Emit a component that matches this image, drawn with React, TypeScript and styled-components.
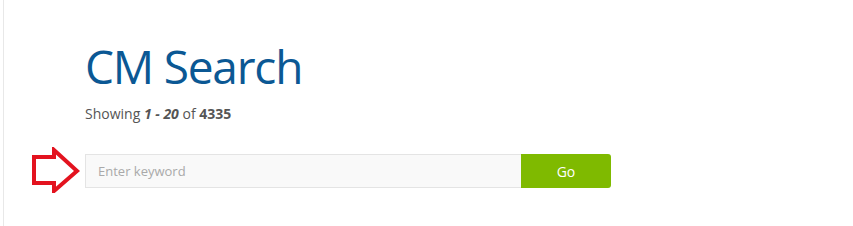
import React from "react";
import styled, { createGlobalStyle } from "styled-components";

const Global = createGlobalStyle`
  html, body { margin: 0; padding: 0; background: #fff; }
  body { font-family: "Open Sans", "Liberation Sans", sans-serif; }
`;

const Page = styled.div`
  margin-left: 3px;
  border-left: 1px solid #e8e8e8;
  height: 226px;
  box-sizing: border-box;
  padding: 34px 0 0 81px;
`;

const Title = styled.h1`
  margin: 0;
  font-family: "Open Sans", sans-serif;
  font-weight: 400;
  font-size: 46px;
  line-height: 64px;
  color: #0b5894;
  letter-spacing: -1.2px;
`;

const Summary = styled.p`
  margin: 6px 0 0 0;
  font-size: 14px;
  line-height: 20px;
  color: #555;
  b { font-weight: 700; }
  i { font-weight: 700; font-style: italic; }
`;

const SearchRow = styled.div`
  position: relative;
  display: flex;
  margin-top: 30px;
  width: 526px;
  height: 34px;
`;

const Input = styled.input`
  flex: 1;
  box-sizing: border-box;
  height: 34px;
  border: 1px solid #e4e4e4;
  border-right: none;
  background: #f9f9f9;
  padding: 0 12px;
  font-family: "Open Sans", sans-serif;
  font-size: 13px;
  color: #333;
  outline: none;
  &::placeholder { color: #a9a9a9; }
`;

const GoButton = styled.button`
  width: 90px;
  height: 34px;
  border: none;
  border-radius: 0 3px 3px 0;
  background: #7fba00;
  color: #fff;
  font-family: "Open Sans", sans-serif;
  font-size: 14px;
  cursor: pointer;
`;

const Arrow = styled.svg`
  position: absolute;
  left: -54px;
  top: -7px;
`;

export default function App() {
  return (
    <>
      <Global />
      <Page>
        <Title>CM Search</Title>
        <Summary>
          Showing <i>1 - 20</i> of <b>4335</b>
        </Summary>
        <SearchRow>
          <Arrow width="50" height="46" viewBox="0 0 50 46">
            <path
              d="M3 10 H23 V3 L46 24 L23 44 V36 H3 Z"
              fill="none"
              stroke="#e3131f"
              strokeWidth="4"
              strokeLinejoin="miter"
            />
          </Arrow>
          <Input placeholder="Enter keyword" />
          <GoButton>Go</GoButton>
        </SearchRow>
      </Page>
    </>
  );
}
